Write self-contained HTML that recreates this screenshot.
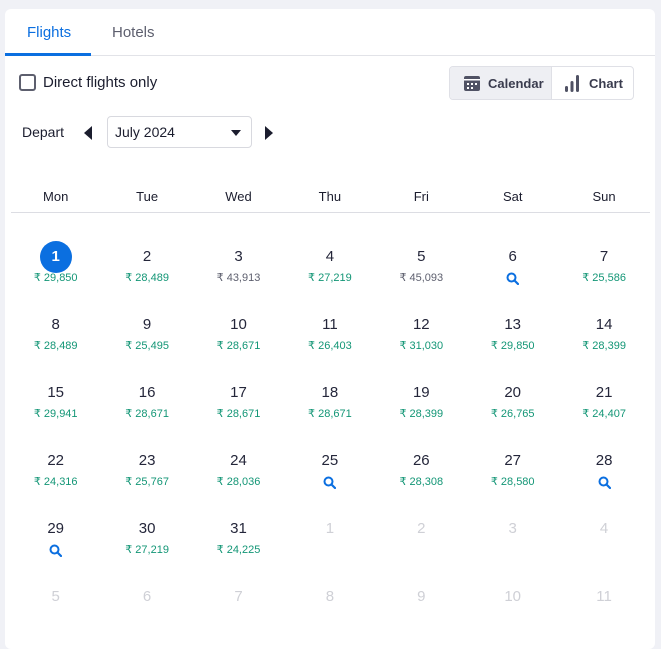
<!DOCTYPE html>
<html><head><meta charset="utf-8"><style>
*{box-sizing:border-box;margin:0;padding:0}
body{width:661px;height:640px;background:#f0f1f6;font-family:"Liberation Sans",sans-serif;color:#1b1d2e;overflow:hidden;position:relative}
.card{position:absolute;left:5px;top:9px;width:650px;height:640px;background:#fff;border-radius:6px}
.abs{position:absolute}
.tabs{position:absolute;left:0;top:0;width:650px;height:47px;border-bottom:1px solid #e2e3e8}
.tab{position:absolute;top:15px;font-size:15px}
.cell{position:absolute;width:91.4px;text-align:center}
.d{font-size:15px;line-height:20px;color:#24263a}
.p{font-size:11px;color:#139676;margin-top:4px;line-height:14px}
.g{color:#5d5f6e}
.f .d{color:#cfd0d6}
.sel{display:inline-block;width:32px;height:32px;border-radius:50%;background:#0b6fe0;color:#fff;font-weight:bold;line-height:32px;margin-top:-6px;margin-bottom:-6px}
.hdr{position:absolute;top:180px;font-size:13px;width:91.4px;text-align:center}
</style></head><body>
<div class="card">
<div class="tabs">
<div class="tab" style="left:22px;color:#0b6fe0">Flights</div>
<div class="tab" style="left:107px;color:#5d5f6e">Hotels</div>
<div class="abs" style="left:0;top:44px;width:86px;height:3px;background:#0b6fe0"></div>
</div>
<div class="abs" style="left:14px;top:65px;width:17px;height:17px;border:2px solid #5d5f6e;border-radius:3px"></div>
<div class="abs" style="left:38px;top:65px;font-size:15px">Direct flights only</div>
<div class="abs" style="left:444px;top:57px;width:185px;height:34px;border:1px solid #dfe0e6;border-radius:4px;overflow:hidden">
<div class="abs" style="left:0;top:0;width:102px;height:34px;background:#eeeff3;border-right:1px solid #dfe0e6"></div>
<svg class="abs" style="left:13px;top:8px" width="18" height="17" viewBox="0 0 18 17"><rect x="1" y="1" width="16" height="15" rx="2" fill="#505264"/><rect x="1" y="4" width="16" height="1.5" fill="#fff"/><g fill="#fff"><rect x="4" y="8" width="2" height="2"/><rect x="8" y="8" width="2" height="2"/><rect x="12" y="8" width="2" height="2"/><rect x="4" y="12" width="2" height="2"/><rect x="8" y="12" width="2" height="2"/></g></svg>
<div class="abs" style="left:38px;top:9px;font-size:13px;font-weight:bold;color:#3a3c4e">Calendar</div>
<svg class="abs" style="left:114px;top:7px" width="16" height="19" viewBox="0 0 16 19"><rect x="1" y="12" width="3" height="6" rx="1.5" fill="#505264"/><rect x="6.5" y="7" width="3" height="11" rx="1.5" fill="#505264"/><rect x="12" y="1" width="3" height="17" rx="1.5" fill="#505264"/></svg>
<div class="abs" style="left:139px;top:9px;font-size:13px;font-weight:bold;color:#3a3c4e">Chart</div>
</div>
<div class="abs" style="left:17px;top:115px;font-size:14px">Depart</div>
<div class="abs" style="left:79px;top:117px;width:0;height:0;border-top:7px solid transparent;border-bottom:7px solid transparent;border-right:8px solid #1b1d2e"></div>
<div class="abs" style="left:102px;top:107px;width:145px;height:32px;border:1px solid #d8d9df;border-radius:4px"></div>
<div class="abs" style="left:110px;top:115px;font-size:14px">July 2024</div>
<div class="abs" style="left:226px;top:121px;border-left:5px solid transparent;border-right:5px solid transparent;border-top:6px solid #1b1d2e"></div>
<div class="abs" style="left:260px;top:117px;width:0;height:0;border-top:7px solid transparent;border-bottom:7px solid transparent;border-left:8px solid #1b1d2e"></div>
<div class="hdr" style="left:5px">Mon</div><div class="hdr" style="left:96.4px">Tue</div><div class="hdr" style="left:187.8px">Wed</div><div class="hdr" style="left:279.2px">Thu</div><div class="hdr" style="left:370.6px">Fri</div><div class="hdr" style="left:462px">Sat</div><div class="hdr" style="left:553.4px">Sun</div>
<div class="abs" style="left:6px;top:203px;width:639px;height:1px;background:#dcdde3"></div>
<div id="cal"></div>
</div>
<script>
var data=[["1","29,850"],["2","28,489"],["3","43,913","g"],["4","27,219"],["5","45,093","g"],["6","s"],["7","25,586"],
["8","28,489"],["9","25,495"],["10","28,671"],["11","26,403"],["12","31,030"],["13","29,850"],["14","28,399"],
["15","29,941"],["16","28,671"],["17","28,671"],["18","28,671"],["19","28,399"],["20","26,765"],["21","24,407"],
["22","24,316"],["23","25,767"],["24","28,036"],["25","s"],["26","28,308"],["27","28,580"],["28","s"],
["29","s"],["30","27,219"],["31","24,225"],["1","f"],["2","f"],["3","f"],["4","f"],
["5","f"],["6","f"],["7","f"],["8","f"],["9","f"],["10","f"],["11","f"]];
var h="";var s='<svg width="13" height="13" viewBox="0 0 13 13" style="margin-top:1px"><circle cx="5.5" cy="5.5" r="4" fill="none" stroke="#0b6fe0" stroke-width="2"/><path d="M8.5 8.5L12 12" stroke="#0b6fe0" stroke-width="2.2" stroke-linecap="round"/></svg>';
data.forEach(function(d,i){var c=i%7,r=Math.floor(i/7);var x=5+c*91.4,y=238+r*68;
var day=(i==0)?'<span class="sel">1</span>':d[0];var p="";
if(d[1]=="s")p='<div class="p">'+s+'</div>';else if(d[1]!="f")p='<div class="p '+(d[2]||"")+'">₹ '+d[1]+'</div>';
h+='<div class="cell'+(d[1]=="f"?" f":"")+'" style="left:'+x+'px;top:'+y+'px"><div class="d">'+day+'</div>'+p+'</div>';});
document.getElementById("cal").innerHTML=h;
</script>
</body></html>
